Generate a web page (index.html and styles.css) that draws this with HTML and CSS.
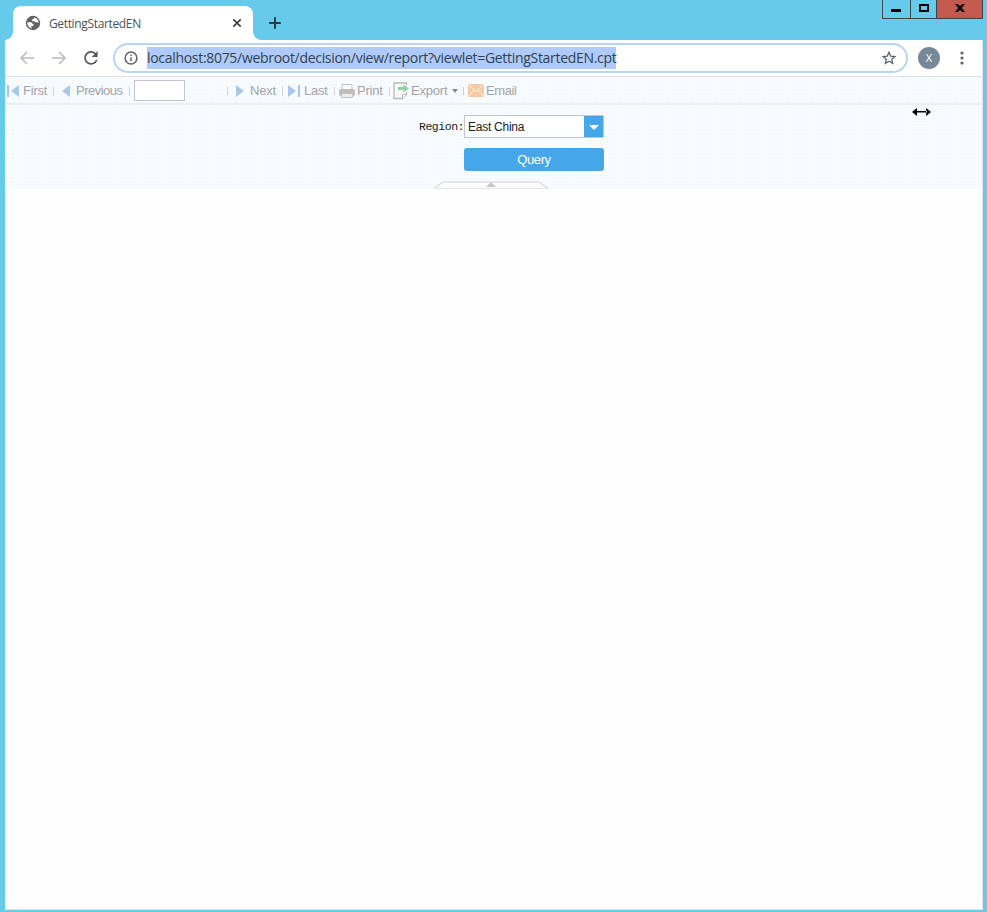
FILE: index.html
```html
<!DOCTYPE html>
<html lang="en">
<head>
<meta charset="utf-8">
<title>GettingStartedEN</title>
<link rel="stylesheet" href="styles.css">
</head>
<body>
<div class="window">
  <header class="titlebar">
    <div class="tab">
      <svg class="globe" width="16" height="16" viewBox="0 0 16 16"><circle cx="8" cy="8" r="7.2" fill="#5f6368"/><path d="M2.5 7.2h3.2c1.5 0 1.2 1.7 2.7 1.7v2H6.5v2.5C3.8 12.500 2 10 2.500 7.200zM9.500 2.500c-.2 1.500-2.500 1.300-2.500 2.700 0 1.500 2.200.5 2.800 1.700.5 1 3 .3 3.800.8C13.700 5.300 12 3.100 9.500 2.500z" fill="#fff"/></svg>
      <span class="tab-title">GettingStartedEN</span>
      <svg class="tab-close" width="10" height="10" viewBox="0 0 10 10"><path d="M1.300 1.300l7.400 7.400M8.700 1.300L1.300 8.700" stroke="#3c4043" stroke-width="1.700"/></svg>
    </div>
    <svg class="newtab" width="14" height="14" viewBox="0 0 14 14"><path d="M7 1.200v11.600M1.200 7h11.600" stroke="#293b43" stroke-width="2"/></svg>
    <div class="controls">
      <span class="control"><svg width="27" height="18"><path d="M8 9h10v3H8z"/></svg></span>
      <span class="control max"><svg width="25" height="18"><path d="M9 5h8v6H9z" fill="none" stroke="#000" stroke-width="2"/></svg></span>
      <span class="control close"><svg width="45" height="18"><path d="M18 4h3l2 2.500L25 4h3l-3.300 4 3.300 4h-3l-2-2.500-2 2.500h-3l3.300-4z"/></svg></span>
    </div>
  </header>
  <div class="page">
    <nav class="navbar">
      <svg class="back" width="16" height="16" viewBox="0 0 16 16"><path d="M15 8H2M8 2L2 8l6 6" fill="none" stroke="#b8babd" stroke-width="1.500"/></svg>
      <svg class="forward" width="16" height="16" viewBox="0 0 16 16"><path d="M1 8h13M8 2l6 6-6 6" fill="none" stroke="#b8babd" stroke-width="1.500"/></svg>
      <svg class="reload" width="16" height="16" viewBox="0 0 16 16"><path d="M12.800 4.200A6 6 0 1 0 13.700 10" fill="none" stroke="#55585d" stroke-width="1.700"/><path d="M14.600 1v6H8.700z" fill="#55585d"/></svg>
      <div class="omnibox">
        <svg class="info" width="14" height="14" viewBox="0 0 14 14"><circle cx="7" cy="7" r="5.900" fill="none" stroke="#5f6368" stroke-width="1.500"/><path d="M7 6.200V10.300M7 3.600v1.500" stroke="#5f6368" stroke-width="1.500"/></svg>
        <span class="url">localhost:8075/webroot/decision/view/report?viewlet=GettingStartedEN.cpt</span>
        <svg class="star" width="14" height="14" viewBox="0 0 14 14"><path d="M7 1.300l1.700 3.800 4.200.4-3.200 2.800 1 4.100L7 10.200l-3.700 2.200 1-4.100L1.100 5.500l4.200-.4z" fill="none" stroke="#5f6368" stroke-width="1.300"/></svg>
      </div>
      <span class="avatar">X</span>
      <svg class="menu" width="4" height="14" viewBox="0 0 4 14" fill="#5f6368"><circle cx="2" cy="2" r="1.600"/><circle cx="2" cy="7" r="1.600"/><circle cx="2" cy="12" r="1.600"/></svg>
    </nav>
    <div class="toolbar">
      <span class="item first"><svg width="16" height="14"><path d="M2 1h2v12H2z" fill="#a9c8e8"/><path d="M14 1v12L6 7z" fill="#a9c8e8"/></svg><b class="t-first">First</b></span>
      <i class="sep"></i>
      <span class="item previous"><svg width="15" height="14"><path d="M9 1v12L1 7z" fill="#a9c8e8"/></svg><b class="t-previous">Previous</b></span>
      <i class="sep"></i>
      <input class="page-number" type="text" aria-label="Page">
      <i class="sep wide"></i>
      <span class="item next"><svg width="14" height="14"><path d="M0 1v12l8-6z" fill="#a9c8e8"/></svg><b class="t-next">Next</b></span>
      <i class="sep"></i>
      <span class="item last"><svg width="16" height="14"><path d="M0 1v12l8-6zM10 1h2v12h-2z" fill="#a9c8e8"/></svg><b class="t-last">Last</b></span>
      <i class="sep"></i>
      <span class="item print"><svg width="18" height="16"><path d="M3 7V1.500h10V7" fill="#fafafa" stroke="#c0c0c0"/><rect y="6" width="16" height="7" rx="2" fill="#bebebe"/><path d="M2.500 10.500h11v4h-11z" fill="#eee" stroke="#c2c2c2"/></svg><b class="t-print">Print</b></span>
      <i class="sep"></i>
      <span class="item export"><svg width="18" height="18"><path d="M13.500 10v2.500L9.500 16.500H1V1h12.500v2" fill="#f7f8f8" stroke="#b8b8b8" stroke-width="1.300"/><path d="M9.500 16.500v-4h4" fill="#fff" stroke="#b8b8b8"/><path d="M5 5h5.500V2.500L16 6.500l-5.500 4V8H5z" fill="#8fd0a6"/></svg><b class="t-export">Export</b><svg class="caret" width="6" height="4"><path d="M0 0h6L3 4z" fill="#888"/></svg></span>
      <i class="sep"></i>
      <span class="item email"><svg width="18" height="13"><rect width="16" height="13" rx="1.500" fill="#f4cba3"/><path d="M1 1l7 6.500L15 1M1 12l5-6M15 12l-5-6" fill="none" stroke="#fff0df"/></svg><b class="t-email">Email</b></span>
    </div>
    <section class="params">
      <div class="field">
        <label class="region">Region:</label>
        <div class="combo"><span class="value">East China</span><span class="drop"><svg width="10" height="5"><path d="M0 0h10L5 5z" fill="#fff"/></svg></span></div>
      </div>
      <button class="query" type="button"><span>Query</span></button>
      <svg class="collapse" width="116" height="8" viewBox="0 0 116 8"><path d="M1 7.500L10 1H106L115 7.500" fill="#fdfdfd" stroke="#dedede" stroke-width="1.500"/><path d="M53 6l5-5 5 5z" fill="#c8c8c8"/><path d="M1 7.500h114" stroke="#e5e5e5"/></svg>
    </section>
    <main class="report"></main>
  </div>
  <svg class="pointer" width="20" height="8" viewBox="0 0 20 8"><path d="M0 4l5-4v8zM19 4L14 0v8zM4 3h11v1.500H4z"/></svg>
</div>
</body>
</html>
```

FILE: styles.css
```css
* { box-sizing: border-box; }
body { margin: 0; background: #66caea; font-family: "Liberation Sans", sans-serif; }
svg { display: block; flex: none; }
.window { position: relative; width: 987px; height: 912px; padding: 0 4px 2px 5px; display: flex; flex-direction: column; overflow: hidden; }
.titlebar { height: 40px; flex: none; display: flex; align-items: flex-start; }
.tab { position: relative; width: 240px; height: 34px; margin: 6px 0 0 8px; padding: 0 11px 0 12px; border-radius: 8px 8px 0 0; background: #fff; display: flex; align-items: center; }
.tab::before, .tab::after { content: ""; position: absolute; bottom: 0; width: 8px; height: 8px; }
.tab::before { left: -8px; background: radial-gradient(circle at 0 0, transparent 7.5px, #fff 8px); }
.tab::after { right: -8px; background: radial-gradient(circle at 100% 0, transparent 7.5px, #fff 8px); }
.tab-title { margin: 1px 0 0 8px; font: 12px/16px "Open Sans", sans-serif; letter-spacing: -0.35px; color: #4d5156; white-space: nowrap; }
.tab-close { margin-left: auto; }
.newtab { margin: 16px 0 0 15px; }
.controls { margin-left: auto; height: 19px; display: flex; border: 1px solid #3e454a; border-top: 0; }
.control + .control { border-left: 1px solid #3e454a; }
.close { background: #c4594f; }
.page { flex: 1; background: #fff; border: solid #e0e6e8; border-width: 0 1px 1px 0; display: flex; flex-direction: column; }
.navbar { height: 37px; flex: none; padding-left: 14px; display: flex; align-items: center; border-bottom: 1px solid #dfdfdf; }
.forward { margin-left: 16px; }
.reload { margin-left: 16px; }
.omnibox { width: 795px; height: 30px; margin-left: 14px; padding: 0 10px 0 9px; border: 2px solid #b6d3f8; border-radius: 15px; display: flex; align-items: center; }
.url { height: 22px; margin-left: 9px; font: 14px/22px "Open Sans", sans-serif; letter-spacing: -0.305px; color: #32414f; background: #aecbfa; white-space: nowrap; }
.star { margin-left: auto; }
.avatar { width: 22px; height: 22px; margin-left: 10px; border-radius: 50%; background: #778899; color: #fff; font: 11px/22px "Open Sans", sans-serif; text-align: center; }
.menu { margin-left: 20px; }
.toolbar, .params { background-color: #f9fcff; background-image: radial-gradient(#edf4fa 0.6px, transparent 1px); background-size: 3px 3px; }
.toolbar { height: 28px; flex: none; padding-top: 1px; display: flex; align-items: center; border-bottom: 2px solid #ededee; color: #a3a3a7; font-size: 13px; line-height: 16px; letter-spacing: -0.2px; }
.item { display: flex; align-items: center; flex: none; white-space: nowrap; }
.item b { font-weight: 400; display: block; }
.sep { width: 1px; height: 8px; flex: none; background: #cfcfd2; }
.first { width: 48px; }
.t-first { margin-left: 2px; }
.previous { width: 75px; padding-left: 7px; }
.t-previous { letter-spacing: -0.5px; }
.page-number { width: 51px; height: 21px; margin-left: 4px; padding: 0; border: 1px solid #c2c4d2; background: #fff; flex: none; }
.wide { margin-left: 42px; }
.next { width: 54px; padding-left: 8px; }
.last { width: 51px; padding-left: 5px; }
.print { width: 54px; padding-left: 4px; }
.export { width: 73px; padding-left: 3px; }
.t-export { width: 36px; }
.caret { margin-left: 5px; }
.email { padding-left: 4px; }
.t-email { letter-spacing: -0.4px; }
.params { height: 84px; flex: none; display: flex; flex-direction: column; align-items: flex-start; }
.field { display: flex; height: 23px; margin: 10px 0 0 414px; }
.region { width: 45px; font: 11.5px/24px "Liberation Mono", monospace; letter-spacing: -0.47px; color: #222; white-space: nowrap; }
.combo { width: 140px; height: 23px; display: flex; border: 1px solid #c0c3d0; background: #fff; }
.value { flex: 1; padding-left: 3px; font-size: 12px; line-height: 23px; letter-spacing: -0.25px; color: #222; }
.drop { width: 19px; height: 21px; background: #46a6ea; display: flex; align-items: center; justify-content: center; }
.drop svg { margin-top: 2px; }
.query { width: 140px; height: 23px; margin: 10px 0 0 459px; padding: 0; border: 0; border-radius: 3px; background: #46a6ea; color: #fff; font: 13px/22px "Liberation Sans", sans-serif; letter-spacing: -0.4px; text-align: center; }
.collapse { margin: 10px 0 0 428px; }
.report { flex: 1; background: #fefefe; }
.pointer { position: absolute; left: 912px; top: 108px; }
```
